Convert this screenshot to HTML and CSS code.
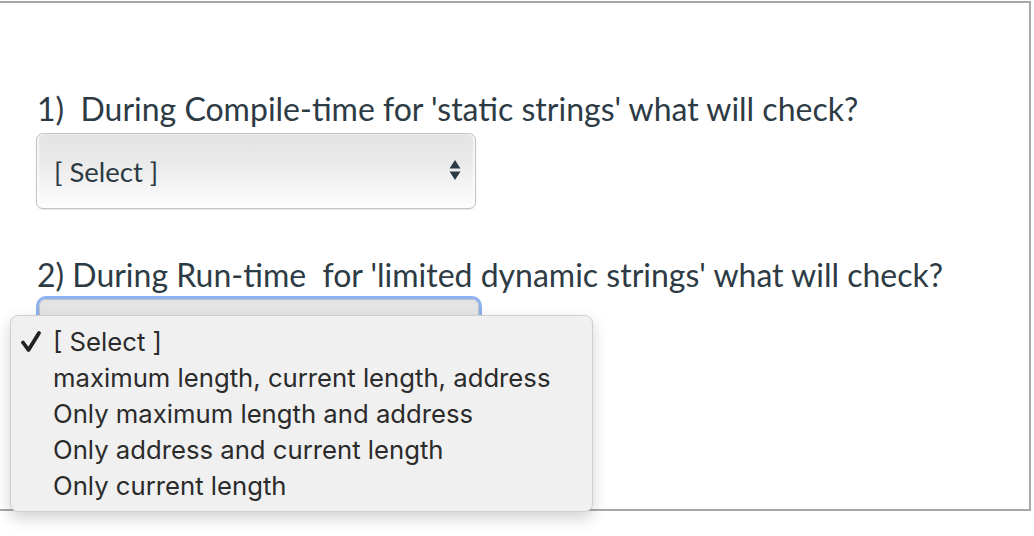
FILE: index.html
```html
<!DOCTYPE html>
<html>
<head>
<meta charset="utf-8">
<link rel="stylesheet" href="styles.css">
</head>
<body>
<div class="frame">
  <div class="question">
    <p class="q-text">1)&nbsp; During Compile-time for 'static strings' what will check?</p>
    <div class="select">
      <span class="select-label">[ Select ]</span>
      <svg class="arrows" width="12" height="22" viewBox="0 0 12 22"><path d="M6 1 L11.5 9.5 H0.5 Z M6 21 L11.5 12.5 H0.5 Z" fill="#2d3b45"/></svg>
    </div>
  </div>
  <div class="question q2">
    <p class="q-text">2) During Run-time&nbsp; for 'limited dynamic strings' what will check?</p>
    <div class="select focused"></div>
  </div>
</div>
<div class="menu">
  <div class="item selected"><svg class="check" width="22" height="22" viewBox="0 0 22 22"><path d="M3 11.5 L8.5 19 L19 2" fill="none" stroke="#222" stroke-width="3.8" stroke-linecap="round" stroke-linejoin="round"/></svg>[ Select ]</div>
  <div class="item">maximum length, current length, address</div>
  <div class="item">Only maximum length and address</div>
  <div class="item">Only address and current length</div>
  <div class="item">Only current length</div>
</div>
</body>
</html>
```
FILE: styles.css
```css
html, body {
  margin: 0;
  padding: 0;
  background: #fff;
}
body {
  width: 1034px;
  height: 536px;
  overflow: hidden;
  position: relative;
  font-family: Lato, "Open Sans", sans-serif;
  color: #2d3b45;
}
.frame {
  margin-top: 1px;
  width: 1031px;
  height: 510px;
  border-top: 2px solid #a8a8a8;
  border-right: 2px solid #a8a8a8;
  border-bottom: 2px solid #a8a8a8;
  box-sizing: border-box;
  padding: 86px 0 0 37px;
}
.question {
  display: flex;
  flex-direction: column;
  align-items: flex-start;
}
.q2 {
  margin-top: 46px;
}
.q-text {
  margin: 0;
  font-size: 32px;
  line-height: 40px;
  white-space: nowrap;
}
.select {
  margin-top: 4px;
  margin-left: -1px;
  width: 440px;
  height: 76px;
  box-sizing: border-box;
  border: 1px solid #c4c4c4;
  border-radius: 7px;
  background: linear-gradient(#e3e3e3 0%, #e9e9e9 35%, #f4f4f4 70%, #fdfdfd 100%);
  box-shadow: inset 2px 0 2px rgba(255,255,255,.7), inset -2px 0 2px rgba(255,255,255,.7), 0 1px 1px rgba(0,0,0,.1);
  display: flex;
  align-items: center;
  justify-content: space-between;
  padding: 0 14px 0 17px;
}
.select-label {
  font-size: 27.5px;
  line-height: 30px;
  margin-top: 2px;
  color: #2d3b45;
}
.arrows {
  margin-top: -2px;
}
.q2 .select {
  margin-top: 4px;
  margin-left: 2px;
  width: 440px;
}
.select.focused {
  box-shadow: 0 0 0 3px #8cb0f0;
}
.menu {
  position: absolute;
  left: 10px;
  top: 315px;
  width: 583px;
  height: 197px;
  box-sizing: border-box;
  background: #f0f0f0;
  border: 1px solid #cfcfcf;
  border-radius: 8px;
  box-shadow: 0 6px 16px rgba(0,0,0,.18);
  padding: 8px 0 0 0;
  font-family: Inter, "Noto Sans", sans-serif;
  font-size: 25.7px;
  color: #2b2b2b;
}
.item {
  height: 36px;
  line-height: 36px;
  padding-left: 42px;
  position: relative;
  white-space: nowrap;
}
.check {
  position: absolute;
  left: 9px;
  top: 7px;
}
```
